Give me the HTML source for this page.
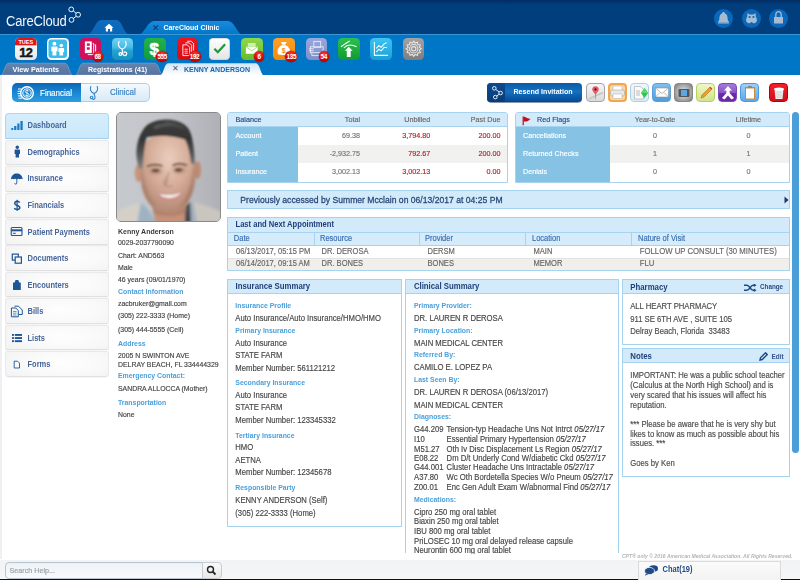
<!DOCTYPE html>
<html><head><meta charset="utf-8"><style>
*{margin:0;padding:0;box-sizing:border-box}
html,body{width:800px;height:580px;overflow:hidden;background:#fff;font-family:"Liberation Sans",sans-serif}
body{position:relative}
.a{position:absolute}
.t{position:absolute;white-space:nowrap;line-height:1}
.ic{position:absolute;top:38px;width:21.5px;height:21.5px;border-radius:4.5px;overflow:hidden}
.ic svg{position:absolute;left:0;top:0}
.badge{position:absolute;height:11px;min-width:11px;border-radius:6px;background:radial-gradient(circle at 50% 30%,#ff3b3b 0,#d40000 60%,#a00 100%);color:#fff;font:bold 6.4px/11px "Liberation Sans",sans-serif;text-align:center;letter-spacing:-0.35px;padding:0 1px;box-shadow:0 0 0 0.5px rgba(120,0,0,.4)}
.side{position:absolute;left:5.5px;width:103.5px;background:linear-gradient(180deg,#fdfdfd 0,#f3f3f3 100%);border:1px solid #e3e3e3;border-top:0}
.box{position:absolute;border:1px solid #a8d4f1;background:#fff}
</style></head><body>
<div class="a" style="left:0px;top:0px;width:800px;height:34px;background:#003e7e"></div>
<div class="a" style="left:0px;top:0px;width:800px;height:4.5px;background:linear-gradient(#002c62 0,#00336c 30%,#003a76 65%,#003e7e 100%)"></div>
<div class="t" style="left:6px;top:13.6px;font-size:14px;color:#f4f8fc;transform:scaleX(0.93);transform-origin:0 0;letter-spacing:-0.2px">CareCloud</div>
<svg class="a" style="left:66px;top:4px" width="16" height="22" viewBox="66 4 16 22"><g fill="none" stroke="#f4f8fc" stroke-width="1"><circle cx="71.25" cy="9.4" r="2.4"/><circle cx="78.1" cy="14.75" r="2.4"/><circle cx="71.5" cy="19.9" r="2.4"/><line x1="73.2" y1="10.9" x2="76.2" y2="13.3"/><line x1="76.2" y1="16.3" x2="73.4" y2="18.4"/></g></svg>
<svg class="a" style="left:0;top:0" width="800" height="36" viewBox="0 0 800 36">
<defs><linearGradient id="tabA" x1="0" y1="0" x2="0" y2="1"><stop offset="0" stop-color="#1a8ae0"/><stop offset="1" stop-color="#0077c6"/></linearGradient>
<linearGradient id="tabH" x1="0" y1="0" x2="0" y2="1"><stop offset="0" stop-color="#0f6dbd"/><stop offset="1" stop-color="#0a66b5"/></linearGradient></defs>
<path d="M89,34.5 C94,30 96,20.5 101,20 L116.5,20 C121.5,20.5 123,30 127.8,34.5 Z" fill="url(#tabH)"/>
<path d="M140,34.5 C146,30 148,21.5 154,21 L228,21 C234,21.5 236,30 241,34.5 Z" fill="url(#tabA)"/>
</svg>
<svg class="a" style="left:103.5px;top:22.8px" width="10" height="9.2" viewBox="0 0 12 11"><path d="M6,0.8 L11.4,5.6 L9.8,5.6 L9.8,10.2 L7.2,10.2 L7.2,7.2 L4.8,7.2 L4.8,10.2 L2.2,10.2 L2.2,5.6 L0.6,5.6 Z" fill="#fff"/></svg>
<div class="t" style="left:151.5px;top:23.8px;font-size:8.5px;color:#0a3a6e">&#x2715;</div>
<div class="t" style="left:163.50px;top:24.75px;font-size:6.95px;color:#fff;font-weight:bold;transform:scaleY(1.09);transform-origin:50% 48%;">CareCloud Clinic</div>
<div class="a" style="left:714.0px;top:8.5px;width:19px;height:19px;border-radius:50%;background:#0a68ba"></div>
<div class="a" style="left:741.5px;top:8.5px;width:19px;height:19px;border-radius:50%;background:#0a68ba"></div>
<div class="a" style="left:769.0px;top:8.5px;width:19px;height:19px;border-radius:50%;background:#0a68ba"></div>
<svg class="a" style="left:714px;top:9px" width="20" height="18" viewBox="0 0 20 18"><path d="M9.5,3 C10.6,3 11,3.8 11,4.4 C13,5 13.5,7 13.6,9.5 L13.9,11.6 L15.2,13 L3.8,13 L5.1,11.6 L5.4,9.5 C5.5,7 6,5 8,4.4 C8,3.8 8.4,3 9.5,3 Z" fill="#a9bbd0"/><rect x="4" y="13.2" width="11" height="1.3" rx="0.6" fill="#a9bbd0"/></svg>
<svg class="a" style="left:742px;top:9px" width="20" height="18" viewBox="0 0 20 18"><path d="M5.5,4 L7.5,5.5 L11.5,5.5 L13.5,4 L13.8,8 C15,9 15.2,11 14.5,13 L12,14.5 L9.5,13 L7,14.5 L4.5,13 C3.8,11 4,9 5.2,8 Z" fill="#a9bbd0"/><circle cx="7.6" cy="8" r="1.1" fill="#0a68ba"/><circle cx="11.4" cy="8" r="1.1" fill="#0a68ba"/></svg>
<svg class="a" style="left:769px;top:9px" width="20" height="18" viewBox="0 0 20 18"><path d="M6.8,8 L6.8,6 C6.8,3.6 8,2.6 9.5,2.6 C11,2.6 12.2,3.6 12.2,6 L12.2,8" fill="none" stroke="#a9bbd0" stroke-width="1.3"/><rect x="5" y="8" width="9" height="6.5" fill="#a9bbd0"/></svg>
<div class="a" style="left:0px;top:34px;width:800px;height:41px;background:#0077c6"></div>
<div class="a" style="left:0px;top:34px;width:800px;height:1px;background:#3a95d6"></div>
<div class="ic" style="left:15px;background:linear-gradient(#fff,#e8e8e8)"><svg width="21.5" height="21.5" viewBox="0 0 22 22"><rect x="0" y="0" width="22" height="7.5" fill="#e4141b"/><text x="11" y="6.3" font-family="Liberation Sans" font-weight="bold" font-size="5.6" fill="#fff" text-anchor="middle">TUES</text><text x="11" y="19.8" font-family="Liberation Sans" font-weight="bold" font-size="13" fill="#151515" stroke="#151515" stroke-width="0.5" text-anchor="middle" letter-spacing="-0.5">12</text></svg></div>
<div class="ic" style="left:47.3px;background:#fff"><svg width="21.5" height="21.5" viewBox="0 0 22 22"><rect x="1.5" y="1.5" width="19" height="19" rx="3" fill="#3bbdec"/><g fill="#fff"><circle cx="7.6" cy="5.8" r="2"/><path d="M5.2,8.6 L10,8.6 C10.5,8.6 10.8,9 10.8,9.5 L10.8,13.5 L9.6,13.5 L9.6,18 L5.6,18 L5.6,13.5 L4.4,13.5 L4.4,9.5 C4.4,9 4.7,8.6 5.2,8.6 Z"/><circle cx="14.6" cy="7.6" r="1.8"/><path d="M12.5,10.2 L16.7,10.2 C17.2,10.2 17.5,10.6 17.5,11 L17.5,14.2 L16.5,14.2 L16.5,18 L12.7,18 L12.7,14.2 L11.7,14.2 L11.7,11 C11.7,10.6 12,10.2 12.5,10.2 Z"/></g></svg></div>
<div class="ic" style="left:79.6px;background:#d2105a"><svg width="21.5" height="21.5" viewBox="0 0 22 22"><g fill="none" stroke="#fff" stroke-width="1"><rect x="5.5" y="4" width="6" height="11" fill="#fff"/><path d="M13,5.5 L14,5.5 L14,16 M15,7 L16,7 L16,17 M8,17 L14,17"/></g><rect x="7" y="5.5" width="3" height="2.5" fill="#d2105a"/><rect x="7" y="9.5" width="3" height="2.5" fill="#d2105a"/></svg></div>
<div class="badge" style="left:92.6px;top:50.5px;min-width:10px">68</div>
<div class="ic" style="left:111.9px;background:linear-gradient(#74d2f2 0,#4cbde8 40%,#23a2d2 58%,#1a8fbd 100%)"><svg width="21.5" height="21.5" viewBox="0 0 22 22"><g fill="none" stroke="#fff" stroke-width="1.3"><path d="M7.5,3.2 C5.5,6 6.5,10 10.5,11.5 C14.5,10 15.5,6 13.5,3.2"/><path d="M10.5,11.5 L10.8,15.5 C11,18.5 14.5,18.8 15,16.3 C15.4,14.2 13,13.5 12,15"/><circle cx="8.6" cy="16.4" r="1.4"/></g></svg></div>
<div class="ic" style="left:144.2px;background:linear-gradient(#23b24c,#129a3c)"><svg width="21.5" height="21.5" viewBox="0 0 22 22"><text x="10.5" y="17.8" font-family="Liberation Sans" font-weight="bold" font-size="17.5" fill="#fff" stroke="#fff" stroke-width="0.6" text-anchor="middle">$</text></svg></div>
<div class="badge" style="left:156.2px;top:50.5px;min-width:12px">555</div>
<div class="ic" style="left:176.5px;background:linear-gradient(#f0141e,#d80a12)"><svg width="21.5" height="21.5" viewBox="0 0 22 22"><g fill="none" stroke="#fff" stroke-width="0.9"><path d="M6,7 L10.5,7 L13,9.5 L13,18 L6,18 Z"/><path d="M8.5,5 L12.5,5 L15,7.5 L15,15"/><path d="M10.5,3.3 L14.5,3.3 L17,5.8 L17,13"/><path d="M7.8,11.5 L11,11.5 M7.8,13.5 L11,13.5 M7.8,15.5 L11,15.5"/></g></svg></div>
<div class="badge" style="left:188.5px;top:50.5px;min-width:12px">192</div>
<div class="ic" style="left:208.8px;background:linear-gradient(#ffffff,#e4e4e4)"><svg width="21.5" height="21.5" viewBox="0 0 22 22"><path d="M5.5,11 L9,14.5 L16.5,6.5" fill="none" stroke="#1a9a3a" stroke-width="2.3"/></svg></div>
<div class="a" style="left:208.8px;top:38px;width:21.5px;height:21.5px;border-radius:4.5px;box-shadow:inset 0 0 0 0.6px #bbb"></div>
<div class="ic" style="left:241.1px;background:linear-gradient(#8fd84a,#66bb2a)"><svg width="21.5" height="21.5" viewBox="0 0 22 22"><g fill="#fff"><path d="M5,9 L17,9 L17,16 L5,16 Z" /><path d="M7,5 L15,5 L15,9 L7,9 Z" fill="#cfeeb0"/></g><path d="M5,9 L11,13 L17,9" fill="none" stroke="#8fd84a" stroke-width="0.8"/></svg></div>
<div class="badge" style="left:254.1px;top:50.5px;min-width:10px">6</div>
<div class="ic" style="left:273.4px;background:linear-gradient(#ffa126,#f08a0c)"><svg width="21.5" height="21.5" viewBox="0 0 22 22"><g fill="#fff"><path d="M8,4 L14,4 L12.5,7 L9.5,7 Z"/><path d="M9,7.5 L13,7.5 C17,9.5 18,13 17,16 C16,18 6,18 5,16 C4,13 5,9.5 9,7.5 Z"/></g><text x="11" y="15.5" font-family="Liberation Sans" font-weight="bold" font-size="7" fill="#f08a0c" text-anchor="middle">$</text></svg></div>
<div class="badge" style="left:285.4px;top:50.5px;min-width:12px">135</div>
<div class="ic" style="left:305.7px;background:linear-gradient(#9aa8dc,#7f8fcb)"><svg width="21.5" height="21.5" viewBox="0 0 22 22"><g fill="none" stroke="#e8ecf8" stroke-width="0.9"><rect x="8" y="3.5" width="7" height="6"/><rect x="4.5" y="9" width="13" height="6"/><path d="M6,15 L6,18 L16,18 L16,15"/><path d="M3,11 L8,11 M3,13 L8,13"/></g></svg></div>
<div class="badge" style="left:318.7px;top:50.5px;min-width:10px">54</div>
<div class="ic" style="left:338px;background:linear-gradient(#2cc04e,#119a32)"><svg width="21.5" height="21.5" viewBox="0 0 22 22"><g fill="none" stroke="#fff" stroke-width="1.1"><path d="M3,9 C7,6 9,4.5 12,3 M6,10 C9,7 13,6 19,9"/></g><path d="M11,9 L15,13 L13,13 L13,19.5 L9,19.5 L9,13 L7,13 Z" fill="#fff"/></svg></div>
<div class="ic" style="left:370.3px;background:linear-gradient(#3cc4f4,#1aa0d8)"><svg width="21.5" height="21.5" viewBox="0 0 22 22"><g fill="none" stroke="#fff" stroke-width="1.1"><path d="M4.5,4 L4.5,17.8 L18.5,17.8"/><path d="M6.5,14.5 L9,11.5 L11.5,13.2 L14.5,9.5 L17.5,10"/><path d="M6.5,10.5 L9,7.8 L11.5,9.5 L14.5,6 L17,4.8"/></g></svg></div>
<div class="ic" style="left:402.6px;background:linear-gradient(#a4a2a2,#7e7c7c)"><svg width="21.5" height="21.5" viewBox="0 0 22 22"><g fill="none" stroke="#e6e6e6" stroke-width="1.1"><circle cx="11" cy="11" r="2.2"/><circle cx="11" cy="11" r="4.3"/><path d="M11,3.2 L12.4,5.2 L14.8,4.3 L15.2,6.8 L17.7,7.2 L16.8,9.6 L18.8,11 L16.8,12.4 L17.7,14.8 L15.2,15.2 L14.8,17.7 L12.4,16.8 L11,18.8 L9.6,16.8 L7.2,17.7 L6.8,15.2 L4.3,14.8 L5.2,12.4 L3.2,11 L5.2,9.6 L4.3,7.2 L6.8,6.8 L7.2,4.3 L9.6,5.2 Z"/></g></svg></div>
<svg class="a" style="left:0;top:62px" width="800" height="13" viewBox="0 0 800 13">
<defs><linearGradient id="stab" x1="0" y1="0" x2="0" y2="1"><stop offset="0" stop-color="#6483ad"/><stop offset="1" stop-color="#5474a0"/></linearGradient>
<linearGradient id="ktab" x1="0" y1="0" x2="0" y2="1"><stop offset="0" stop-color="#cfe6f7"/><stop offset="1" stop-color="#ffffff"/></linearGradient></defs>
<path d="M1.5,13 C4,11 5,1.5 8.5,1.2 L65,1.2 C68.5,1.5 69.5,11 72,13 Z" fill="url(#stab)" stroke="#8ea6c6" stroke-width="0.6"/>
<path d="M76,13 C78.5,11 79.5,1.5 83,1.2 L155,1.2 C158.5,1.5 159.5,11 162,13 Z" fill="url(#stab)" stroke="#8ea6c6" stroke-width="0.6"/>
<path d="M161,13 C163.5,11 164.5,1.5 168,1.2 L256,1.2 C259.5,1.5 260.5,11 263,13 Z" fill="url(#ktab)"/>
</svg>
<div class="t" style="left:12.50px;top:65.51px;font-size:7.25px;color:#fff;font-weight:bold;transform:scaleY(1.09);transform-origin:50% 48%;">View Patients</div>
<div class="t" style="left:88.00px;top:65.63px;font-size:7px;color:#fff;font-weight:bold;transform:scaleY(1.09);transform-origin:50% 48%;">Registrations (41)</div>
<div class="t" style="left:172px;top:65px;font-size:7.5px;color:#557">&#x2715;</div>
<div class="t" style="left:184.00px;top:66.13px;font-size:7px;color:#1a64a8;font-weight:bold;transform:scaleY(1.09);transform-origin:50% 48%;">KENNY ANDERSON</div>
<div class="a" style="left:11.5px;top:83px;width:69.5px;height:18.5px;border-radius:5px 0 0 5px;background:linear-gradient(#0b67b6 0,#1a86d2 50%,#2c9de0 100%)"></div>
<div class="a" style="left:80.5px;top:83px;width:69.5px;height:18.5px;border-radius:0 5px 5px 0;background:linear-gradient(#f3f9fd,#d9eaf8);border:1px solid #a8d0ef;border-left:0"></div>
<svg class="a" style="left:15px;top:84px" width="22" height="18" viewBox="15 84 22 18"><g fill="none" stroke="#fff"><circle cx="27" cy="93" r="6.3" stroke-width="1.4"/><circle cx="27" cy="93" r="4.2" stroke-width="1"/></g><path d="M28.8,91.3 C28.5,90.7 27.9,90.4 27,90.4 C26,90.4 25.3,90.9 25.3,91.7 C25.3,93.5 28.8,92.6 28.8,94.4 C28.8,95.3 28,95.7 27,95.7 C26,95.7 25.3,95.3 25,94.7" fill="none" stroke="#fff" stroke-width="0.9"/><path d="M27,89.5 L27,96.5" stroke="#fff" stroke-width="0.6"/><g stroke="#fff" stroke-width="1"><line x1="18" y1="89" x2="21.5" y2="89"/><line x1="17.5" y1="91.3" x2="21" y2="91.3"/><line x1="17.5" y1="93.6" x2="21" y2="93.6"/><line x1="18" y1="95.9" x2="21.3" y2="95.9"/><line x1="18.5" y1="98.2" x2="22" y2="98.2"/></g></svg>
<div class="t" style="left:40.00px;top:89.64px;font-size:8px;color:#fff;-webkit-text-stroke:0.15px #fff;transform:scaleY(1.09);transform-origin:50% 48%;">Financial</div>
<svg class="a" style="left:89px;top:84.5px" width="11" height="16" viewBox="0 0 11 16"><g fill="none" stroke="#3a86c8" stroke-width="1.1"><path d="M2,1 C0.5,4 1.5,7 5,8.5 C8.5,7 9.5,4 8,1"/><path d="M5,8.5 L6,12 C6.5,14.5 4,15 3,13.5"/><circle cx="2.6" cy="12.5" r="1.3"/></g></svg>
<div class="t" style="left:110.00px;top:89.44px;font-size:8px;color:#3580c2;-webkit-text-stroke:0.15px #3580c2;transform:scaleY(1.09);transform-origin:50% 48%;">Clinical</div>
<div class="a" style="left:487px;top:82.8px;width:95px;height:18.8px;border-radius:4px;background:linear-gradient(#0c5aa6 0,#1470c0 45%,#0b5aa8 75%,#074890 100%);box-shadow:0 0.5px 0.5px #0a3260"></div>
<div class="a" style="left:487px;top:82.8px;width:18px;height:18.8px;border-radius:4px 0 0 4px;background:linear-gradient(#0d4a8e,#083c78)"></div>
<svg class="a" style="left:487px;top:82.8px" width="18" height="19" viewBox="487 82.8 18 19"><g fill="none" stroke="#f0f4f8" stroke-width="0.95"><circle cx="494.3" cy="88.1" r="1.8"/><circle cx="500.6" cy="92.8" r="1.8"/><circle cx="495.3" cy="96.9" r="1.8"/><line x1="495.7" y1="89.2" x2="499.1" y2="91.7"/><line x1="499.2" y1="94" x2="496.7" y2="95.8"/></g></svg>
<div class="t" style="left:513.50px;top:89.28px;font-size:7.1px;color:#fff;font-weight:bold;transform:scaleY(1.09);transform-origin:50% 48%;">Resend Invitation</div>
<div class="a" style="left:586px;top:83px;width:19px;height:18.5px;border-radius:4px;background:linear-gradient(#f6f6f6,#dadada);border:1px solid #a4a4a4;overflow:hidden"><svg width="19" height="18.5" viewBox="0 0 19 18.5" style="position:absolute;left:-1px;top:-1px"><path d="M3,16 L17,9.5" stroke="#c4c4c4" stroke-width="1.6"/><path d="M9.5,3.2 C11.8,3.2 12.8,4.8 12.8,6.4 C12.8,8.4 10.6,9.5 9.9,11.5 L9.7,16.5 L9.3,16.5 L9.1,11.5 C8.4,9.5 6.2,8.4 6.2,6.4 C6.2,4.8 7.2,3.2 9.5,3.2 Z" fill="#e85a68"/><circle cx="9.5" cy="6.4" r="1.1" fill="#222"/></svg></div>
<div class="a" style="left:608px;top:83px;width:19px;height:18.5px;border-radius:4px;background:#f6a64a;border:none;overflow:hidden"><svg width="19" height="18.5" viewBox="0 0 19 18.5" style="position:absolute;left:-1px;top:-1px"><rect x="3" y="3" width="15" height="15" rx="3" fill="#fcd9a8"/><rect x="6" y="4" width="9" height="5" fill="#fff" stroke="#aaa" stroke-width="0.5"/><rect x="3.5" y="8" width="14" height="6" rx="1.5" fill="#e8e8e8" stroke="#999" stroke-width="0.5"/><rect x="6" y="12" width="9" height="4.5" fill="#fff" stroke="#aaa" stroke-width="0.5"/></svg></div>
<div class="a" style="left:630px;top:83px;width:19px;height:18.5px;border-radius:4px;background:linear-gradient(#eef7fd,#d6eaf8);border:1px solid #b4cfe2;overflow:hidden"><svg width="19" height="18.5" viewBox="0 0 19 18.5" style="position:absolute;left:-1px;top:-1px"><path d="M4.5,3.5 L10.5,3.5 L13.5,6.5 L13.5,16 L4.5,16 Z" fill="#fafafa" stroke="#aaa" stroke-width="0.6"/><path d="M6,8 L10,8 M6,10 L10,10 M6,12 L10,12" stroke="#999" stroke-width="0.6"/><path d="M14.5,5 L18,10 L14.5,15 L11,10 Z" fill="#33c24e"/><path d="M14.5,5 L18,10 L11,10 Z" fill="#5ad86a"/></svg></div>
<div class="a" style="left:652px;top:83px;width:19px;height:18.5px;border-radius:4px;background:linear-gradient(#7fc0f0,#4a9de0);border:1px solid #5aa0d8;overflow:hidden"><svg width="19" height="18.5" viewBox="0 0 19 18.5" style="position:absolute;left:-1px;top:-1px"><rect x="3.5" y="5" width="13" height="9" fill="#fff" stroke="#888" stroke-width="0.5"/><path d="M3.5,5 L10,10.5 L16.5,5 M3.5,14 L8,9.5 M16.5,14 L12,9.5" fill="none" stroke="#888" stroke-width="0.6"/></svg></div>
<div class="a" style="left:674px;top:83px;width:19px;height:18.5px;border-radius:4px;background:radial-gradient(circle,#eee 0,#aaa 60%,#777 100%);border:1px solid #888;overflow:hidden"><svg width="19" height="18.5" viewBox="0 0 19 18.5" style="position:absolute;left:-1px;top:-1px"><rect x="4.5" y="6" width="11" height="8" rx="1.2" fill="#555"/><rect x="7" y="7" width="6" height="6" fill="#5aa8e8"/></svg></div>
<div class="a" style="left:696px;top:83px;width:19px;height:18.5px;border-radius:4px;background:linear-gradient(#eef7c8,#cfe48a);border:1px solid #b8d060;overflow:hidden"><svg width="19" height="18.5" viewBox="0 0 19 18.5" style="position:absolute;left:-1px;top:-1px"><path d="M5,15 L6,12 L13.5,4.5 L15.5,6.5 L8,14 Z" fill="#f0a020" stroke="#a06010" stroke-width="0.5"/><path d="M13.5,4.5 L15.5,6.5 L16.3,5.7 L14.3,3.7 Z" fill="#e23"/></svg></div>
<div class="a" style="left:718px;top:83px;width:19px;height:18.5px;border-radius:4px;background:linear-gradient(#a67ad8 0,#8a52c6 55%,#6a2aa8 56%,#6a2aa8 100%);border:1px solid #7a4ab8;overflow:hidden"><svg width="19" height="18.5" viewBox="0 0 19 18.5" style="position:absolute;left:-1px;top:-1px"><path d="M10,3 L14,7.5 L11.6,7.5 L11.6,10 L16,15 L13.5,16.5 L10,12.5 L6.5,16.5 L4,15 L8.4,10 L8.4,7.5 L6,7.5 Z" fill="#fff"/></svg></div>
<div class="a" style="left:740px;top:83px;width:19px;height:18.5px;border-radius:4px;background:linear-gradient(#9dd0f8,#5aa8ec);border:1px solid #4a98e0;overflow:hidden"><svg width="19" height="18.5" viewBox="0 0 19 18.5" style="position:absolute;left:-1px;top:-1px"><rect x="5" y="4" width="10" height="12.5" fill="#c88a40"/><rect x="6" y="5.5" width="8" height="10" fill="#fff"/><rect x="8" y="3" width="4" height="2" fill="#888"/></svg></div>
<div class="a" style="left:769px;top:83px;width:19px;height:18.5px;border-radius:4px;background:linear-gradient(#f0202a,#d0101a);border:1px solid #b00;overflow:hidden"><svg width="19" height="18.5" viewBox="0 0 19 18.5" style="position:absolute;left:-1px;top:-1px"><path d="M5.5,6 L14.5,6 L13.5,16 L6.5,16 Z" fill="#eee"/><ellipse cx="10" cy="6" rx="5" ry="1.6" fill="#fff"/><path d="M8,8 L8.2,15 M10,8 L10,15 M12,8 L11.8,15" stroke="#bbb" stroke-width="0.5"/></svg></div>
<div class="a" style="left:0px;top:75px;width:1.6px;height:484px;background:#eff0f2"></div>
<div class="a" style="left:5.3px;top:113px;width:103.5px;height:25.8px;border-radius:4px 4px 1px 1px;background:linear-gradient(#d6eefc,#c9e8fb);border:1px solid #acd7f2;border-bottom-color:#a4d0ee"></div>
<div class="t" style="left:27.50px;top:122.39px;font-size:7.5px;color:#46659a;font-weight:bold;transform:scaleY(1.09);transform-origin:50% 48%;">Dashboard</div>
<div class="a" style="left:5.3px;top:139.8px;width:103.5px;height:25.6px;border-radius:2px;background:radial-gradient(ellipse 70% 90% at 55% 45%,#fefefe 0,#f9f9f9 55%,#f2f2f2 100%);border:1px solid #e9e9e9;border-bottom-color:#e0e0e0;box-shadow:0 0.6px 0.6px rgba(0,0,0,0.07)"></div>
<div class="t" style="left:27.50px;top:148.94px;font-size:7.5px;color:#46659a;font-weight:bold;transform:scaleY(1.09);transform-origin:50% 48%;">Demographics</div>
<div class="a" style="left:5.3px;top:166.2px;width:103.5px;height:25.6px;border-radius:2px;background:radial-gradient(ellipse 70% 90% at 55% 45%,#fefefe 0,#f9f9f9 55%,#f2f2f2 100%);border:1px solid #e9e9e9;border-bottom-color:#e0e0e0;box-shadow:0 0.6px 0.6px rgba(0,0,0,0.07)"></div>
<div class="t" style="left:27.50px;top:175.48px;font-size:7.5px;color:#46659a;font-weight:bold;transform:scaleY(1.09);transform-origin:50% 48%;">Insurance</div>
<div class="a" style="left:5.3px;top:192.6px;width:103.5px;height:25.6px;border-radius:2px;background:radial-gradient(ellipse 70% 90% at 55% 45%,#fefefe 0,#f9f9f9 55%,#f2f2f2 100%);border:1px solid #e9e9e9;border-bottom-color:#e0e0e0;box-shadow:0 0.6px 0.6px rgba(0,0,0,0.07)"></div>
<div class="t" style="left:27.50px;top:202.03px;font-size:7.5px;color:#46659a;font-weight:bold;transform:scaleY(1.09);transform-origin:50% 48%;">Financials</div>
<div class="a" style="left:5.3px;top:219.0px;width:103.5px;height:25.6px;border-radius:2px;background:radial-gradient(ellipse 70% 90% at 55% 45%,#fefefe 0,#f9f9f9 55%,#f2f2f2 100%);border:1px solid #e9e9e9;border-bottom-color:#e0e0e0;box-shadow:0 0.6px 0.6px rgba(0,0,0,0.07)"></div>
<div class="t" style="left:27.50px;top:228.58px;font-size:7.5px;color:#46659a;font-weight:bold;transform:scaleY(1.09);transform-origin:50% 48%;">Patient Payments</div>
<div class="a" style="left:5.3px;top:245.4px;width:103.5px;height:25.6px;border-radius:2px;background:radial-gradient(ellipse 70% 90% at 55% 45%,#fefefe 0,#f9f9f9 55%,#f2f2f2 100%);border:1px solid #e9e9e9;border-bottom-color:#e0e0e0;box-shadow:0 0.6px 0.6px rgba(0,0,0,0.07)"></div>
<div class="t" style="left:27.50px;top:255.13px;font-size:7.5px;color:#46659a;font-weight:bold;transform:scaleY(1.09);transform-origin:50% 48%;">Documents</div>
<div class="a" style="left:5.3px;top:271.8px;width:103.5px;height:25.6px;border-radius:2px;background:radial-gradient(ellipse 70% 90% at 55% 45%,#fefefe 0,#f9f9f9 55%,#f2f2f2 100%);border:1px solid #e9e9e9;border-bottom-color:#e0e0e0;box-shadow:0 0.6px 0.6px rgba(0,0,0,0.07)"></div>
<div class="t" style="left:27.50px;top:281.69px;font-size:7.5px;color:#46659a;font-weight:bold;transform:scaleY(1.09);transform-origin:50% 48%;">Encounters</div>
<div class="a" style="left:5.3px;top:298.2px;width:103.5px;height:25.6px;border-radius:2px;background:radial-gradient(ellipse 70% 90% at 55% 45%,#fefefe 0,#f9f9f9 55%,#f2f2f2 100%);border:1px solid #e9e9e9;border-bottom-color:#e0e0e0;box-shadow:0 0.6px 0.6px rgba(0,0,0,0.07)"></div>
<div class="t" style="left:27.50px;top:308.24px;font-size:7.5px;color:#46659a;font-weight:bold;transform:scaleY(1.09);transform-origin:50% 48%;">Bills</div>
<div class="a" style="left:5.3px;top:324.6px;width:103.5px;height:25.6px;border-radius:2px;background:radial-gradient(ellipse 70% 90% at 55% 45%,#fefefe 0,#f9f9f9 55%,#f2f2f2 100%);border:1px solid #e9e9e9;border-bottom-color:#e0e0e0;box-shadow:0 0.6px 0.6px rgba(0,0,0,0.07)"></div>
<div class="t" style="left:27.50px;top:334.78px;font-size:7.5px;color:#46659a;font-weight:bold;transform:scaleY(1.09);transform-origin:50% 48%;">Lists</div>
<div class="a" style="left:5.3px;top:351.0px;width:103.5px;height:25.6px;border-radius:2px 2px 4px 4px;background:radial-gradient(ellipse 70% 90% at 55% 45%,#fefefe 0,#f9f9f9 55%,#f2f2f2 100%);border:1px solid #e9e9e9;border-bottom-color:#e0e0e0;box-shadow:0 0.6px 0.6px rgba(0,0,0,0.07)"></div>
<div class="t" style="left:27.50px;top:361.34px;font-size:7.5px;color:#46659a;font-weight:bold;transform:scaleY(1.09);transform-origin:50% 48%;">Forms</div>
<svg class="a" style="left:0;top:105px" width="30" height="275" viewBox="0 105 30 275"><g fill="#1d5596">
<g fill="#1a78c6"><rect x="11.3" y="128" width="2" height="2"/><rect x="14.2" y="126" width="2.2" height="4"/><rect x="17.3" y="123.5" width="2.2" height="6.5"/><rect x="20.4" y="121" width="2.3" height="9"/></g>
<circle cx="17.3" cy="147.3" r="1.7"/><path d="M15.2,149.6 L19.4,149.6 C19.9,149.6 20,150 20,150.5 L20,154 L19,154 L19,157.6 L15.6,157.6 L15.6,154 L14.6,154 L14.6,150.5 C14.6,150 14.8,149.6 15.2,149.6 Z"/>
<path d="M10.9,179.3 C11.4,175.5 13.8,173.5 16.8,173.5 C19.8,173.5 22.3,175.5 22.8,179.3 C21.8,178.4 20.6,178.4 19.8,179.3 C19,178.4 17.6,178.4 16.8,179.3 C16,178.4 14.6,178.4 13.8,179.3 C13,178.4 11.8,178.4 10.9,179.3 Z"/><path d="M16.8,179 L16.8,183 C16.8,184.6 15,184.6 14.7,183.2" fill="none" stroke="#1d5596" stroke-width="0.9"/>
<path d="M19.6,202.6 C19.2,201.6 18.3,201.3 17.2,201.3 C15.6,201.3 14.7,202.1 14.7,203.3 C14.7,206.2 19.8,204.6 19.8,207.6 C19.8,208.9 18.7,209.6 17.1,209.6 C15.8,209.6 14.8,209.1 14.4,208" fill="none" stroke="#1d5596" stroke-width="1.5"/><rect x="16.5" y="199.8" width="1.2" height="11"/>
<rect x="11.2" y="227.5" width="10.8" height="8" rx="1" fill="none" stroke="#1d5596" stroke-width="1.1"/><rect x="11.2" y="229.3" width="10.8" height="2"/><rect x="12.8" y="232.8" width="3" height="1"/>
<rect x="12.3" y="254.1" width="6" height="6" fill="none" stroke="#1d5596" stroke-width="1.2"/><rect x="15.2" y="257" width="6.2" height="6.2" fill="#f6f6f6" stroke="#1d5596" stroke-width="1.2"/>
<rect x="13" y="282.5" width="7.8" height="7.5" rx="0.6"/><path d="M14.5,283 L15.5,280 L18.3,280 L19.3,283 Z"/>
<path d="M11.4,308 L15.8,308 L18.3,310.5 L18.3,316.8 L11.4,316.8 Z" fill="#f6f6f6" stroke="#1d5596" stroke-width="1"/><path d="M14.5,306.2 L18.5,306.2 L22.3,310 L22.3,314.5 L19,314.5" fill="none" stroke="#1d5596" stroke-width="1"/><path d="M13,311.5 L16.5,311.5 M13,313.2 L16.5,313.2 M13,315 L16.5,315" stroke="#1d5596" stroke-width="0.6"/>
<rect x="12" y="334" width="1.9" height="1.9"/><rect x="14.8" y="334" width="7.2" height="1.9"/><rect x="12" y="337.1" width="1.9" height="1.9"/><rect x="14.8" y="337.1" width="7.2" height="1.9"/><rect x="12" y="340.2" width="1.9" height="1.9"/><rect x="14.8" y="340.2" width="7.2" height="1.9"/>
<path d="M14.2,361.2 L17.6,361.2 L19.5,363.1 L19.5,368 L14.2,368 Z" fill="#f8f8f8" stroke="#1d5596" stroke-width="0.9"/>
</g></svg>
<div class="a" style="left:116.2px;top:112.3px;width:104.6px;height:110px;border-radius:5px;overflow:hidden;border:1px solid #8a8a8a;background:#c9cacd">
<svg width="103" height="108" viewBox="0 0 103 108" style="position:absolute;left:0;top:0">
<defs>
<linearGradient id="pbg" x1="0" y1="0" x2="1" y2="0"><stop offset="0" stop-color="#c6c9ce"/><stop offset="0.5" stop-color="#c2c4c9"/><stop offset="1" stop-color="#b0b0b7"/></linearGradient>
<radialGradient id="skin" cx="0.52" cy="0.3" r="0.75"><stop offset="0" stop-color="#eacdbd"/><stop offset="0.45" stop-color="#d8b09c"/><stop offset="1" stop-color="#ad826e"/></radialGradient>
<linearGradient id="hair" x1="0" y1="0" x2="0" y2="1"><stop offset="0" stop-color="#3a3a3a"/><stop offset="0.4" stop-color="#363636"/><stop offset="0.7" stop-color="#555"/><stop offset="1" stop-color="#8a8a8a"/></linearGradient>
<filter id="bl" x="-20%" y="-20%" width="140%" height="140%"><feGaussianBlur stdDeviation="1.5"/></filter>
<filter id="bl2" x="-10%" y="-10%" width="120%" height="120%"><feGaussianBlur stdDeviation="0.8"/></filter>
</defs>
<rect width="103" height="108" fill="url(#pbg)"/>
<g filter="url(#bl)">
<path d="M-2,110 L-2,99 C6,95 14,92 22,90 L26,110 Z" fill="#d4d0c8"/>
<path d="M76,110 L76,89 C86,91 96,95 105,99 L105,110 Z" fill="#c9c6c0"/>
<path d="M20,110 L24,90 C28,92 33,98 38,108 L38,110 Z" fill="#9fb2c2"/>
<path d="M66,110 L68,98 C70,94 72,90 76,88 L80,110 Z" fill="#a2b0bc"/>
<path d="M67,110 L69,92 L73,89 L74,110 Z" fill="#3c4048"/>
<path d="M34,80 C35,92 37,100 38,110 L68,110 C68,100 69,92 71,80 Z" fill="#c4927a"/>
<path d="M36,92 C42,100 60,100 68,92 L68,100 C60,104 44,104 36,100 Z" fill="#a87662" opacity="0.6"/>
</g>
<g filter="url(#bl2)">
<ellipse cx="21.5" cy="60" rx="3.8" ry="9" fill="#c8967e"/>
<ellipse cx="80.5" cy="57" rx="3.6" ry="9" fill="#c08c74"/>
<path d="M24,40 C24,28 35,22 50,22 C66,22 77,28 77,42 L78,62 C78,84 68,100 52,100 C36,100 24,86 24,64 Z" fill="url(#skin)"/>
<g filter="url(#bl)" opacity="0.55"><path d="M24,50 C26,70 30,84 40,94 C32,90 26,80 24,64 Z" fill="#8e6250"/><path d="M77,48 C76,68 72,84 62,95 C72,90 78,78 78,60 Z" fill="#8e6250"/><ellipse cx="39" cy="58" rx="6.5" ry="3.5" fill="#9a6e5a"/><ellipse cx="62" cy="57" rx="6.5" ry="3.5" fill="#9a6e5a"/><path d="M49,60 C48,66 46,70 46,73 L50,72 Z" fill="#a07260"/></g>
<path d="M22,56 C19,46 19,38 20,32.9 C22,22 27,13 33.5,10.1 C39,7 44,6.5 49,6.5 C56,6.5 62,8 66.6,11.1 C71,14 74,19 74.9,24.6 C76.5,32 78,42 77.8,52 L74,50 C73,42 71.5,33 68,26.5 C62,24.5 56,23.5 49,23 C42,23 35,23.5 29.8,24.1 C28,30 27,38 26.5,44 L25.5,56 Z" fill="url(#hair)"/><g filter="url(#bl2)" opacity="0.5"><path d="M36,14 C44,10 54,10 62,13 C56,12 46,12 38,16 Z" fill="#8a8a8a"/><path d="M48,9 C56,9 64,12 70,17 C62,14 56,12 48,11 Z" fill="#777"/></g>
<path d="M30,53.5 C35,51 40,51 45.5,53" fill="none" stroke="#5a4034" stroke-width="1.8"/>
<path d="M55.5,52.5 C60,50 65,50 70,52.5" fill="none" stroke="#5a4034" stroke-width="1.8"/>
<ellipse cx="38.5" cy="57.5" rx="3.8" ry="1.7" fill="#614438"/>
<ellipse cx="61.5" cy="57" rx="3.8" ry="1.7" fill="#614438"/>
<path d="M52,59 C51,64 49,69 48,72 C50,74 54,74 56,72" fill="none" stroke="#b08068" stroke-width="1"/>
<path d="M40.5,80.5 C47,86.5 58,86.5 65.5,79.5 C58,82.5 47,83 40.5,80.5 Z" fill="#f8f0ec"/>
<path d="M40.5,80.5 C47,89 58,89 65.5,79.5" fill="none" stroke="#d08890" stroke-width="1.8"/>
</g>
</svg></div>
<div class="t" style="left:118.00px;top:228.13px;font-size:7.0px;color:#3a3a3a;font-weight:bold;transform:scaleY(1.09);transform-origin:50% 48%;">Kenny Anderson</div>
<div class="t" style="left:118.00px;top:240.47px;font-size:6.9px;color:#444;-webkit-text-stroke:0.15px #444;transform:scaleY(1.09);transform-origin:50% 48%;">0029-2037790090</div>
<div class="t" style="left:118.00px;top:252.57px;font-size:6.9px;color:#444;-webkit-text-stroke:0.15px #444;transform:scaleY(1.09);transform-origin:50% 48%;">Chart: AND563</div>
<div class="t" style="left:118.00px;top:265.27px;font-size:6.9px;color:#444;-webkit-text-stroke:0.15px #444;transform:scaleY(1.09);transform-origin:50% 48%;">Male</div>
<div class="t" style="left:118.00px;top:276.57px;font-size:6.9px;color:#444;-webkit-text-stroke:0.15px #444;transform:scaleY(1.09);transform-origin:50% 48%;">46 years (09/01/1970)</div>
<div class="t" style="left:118.00px;top:288.57px;font-size:6.9px;color:#4aa0dc;font-weight:bold;transform:scaleY(1.09);transform-origin:50% 48%;">Contact Information</div>
<div class="t" style="left:118.00px;top:300.57px;font-size:6.9px;color:#444;-webkit-text-stroke:0.15px #444;transform:scaleY(1.09);transform-origin:50% 48%;">zacbruker@gmail.com</div>
<div class="t" style="left:118.00px;top:312.57px;font-size:6.9px;color:#444;-webkit-text-stroke:0.15px #444;transform:scaleY(1.09);transform-origin:50% 48%;">(305) 222-3333 (Home)</div>
<div class="t" style="left:118.00px;top:326.57px;font-size:6.9px;color:#444;-webkit-text-stroke:0.15px #444;transform:scaleY(1.09);transform-origin:50% 48%;">(305) 444-5555 (Cell)</div>
<div class="t" style="left:118.00px;top:341.27px;font-size:6.9px;color:#4aa0dc;font-weight:bold;transform:scaleY(1.09);transform-origin:50% 48%;">Address</div>
<div class="t" style="left:118.00px;top:352.57px;font-size:6.9px;color:#444;-webkit-text-stroke:0.15px #444;transform:scaleY(1.09);transform-origin:50% 48%;">2005 N SWINTON AVE</div>
<div class="t" style="left:118.00px;top:361.97px;font-size:6.9px;color:#444;-webkit-text-stroke:0.15px #444;transform:scaleY(1.09);transform-origin:50% 48%;">DELRAY BEACH, FL 334444329</div>
<div class="t" style="left:118.00px;top:373.37px;font-size:6.9px;color:#4aa0dc;font-weight:bold;transform:scaleY(1.09);transform-origin:50% 48%;">Emergency Contact:</div>
<div class="t" style="left:118.00px;top:385.57px;font-size:6.9px;color:#444;-webkit-text-stroke:0.15px #444;transform:scaleY(1.09);transform-origin:50% 48%;">SANDRA ALLOCCA (Mother)</div>
<div class="t" style="left:118.00px;top:399.77px;font-size:6.9px;color:#4aa0dc;font-weight:bold;transform:scaleY(1.09);transform-origin:50% 48%;">Transportation</div>
<div class="t" style="left:118.00px;top:411.97px;font-size:6.9px;color:#444;-webkit-text-stroke:0.15px #444;transform:scaleY(1.09);transform-origin:50% 48%;">None</div>
<div class="a" style="left:227px;top:112.4px;width:281.2px;height:70.2px;border:1px solid #a6d3f0;border-radius:3px 3px 0 0;background:#fff;overflow:hidden"><div class="a" style="left:0;top:0;right:0;height:13.4px;background:#d3eafa;border-bottom:1px solid #a6d3f0"></div><div class="a" style="left:0;top:13.4px;width:70px;bottom:0;background:#86c2e4"></div><div class="a" style="left:70px;top:31.8px;right:0;height:18.3px;background:#f1f1ef"></div></div>
<div class="t" style="left:235.50px;top:116.23px;font-size:7.2px;color:#2a4a80;-webkit-text-stroke:0.15px #2a4a80;transform:scaleY(1.09);transform-origin:50% 48%;">Balance</div>
<div class="t" style="right:440.00px;top:116.23px;font-size:7.2px;color:#666;-webkit-text-stroke:0.15px #666;transform:scaleY(1.09);transform-origin:50% 48%;">Total</div>
<div class="t" style="right:369.70px;top:116.23px;font-size:7.2px;color:#666;-webkit-text-stroke:0.15px #666;transform:scaleY(1.09);transform-origin:50% 48%;">Unbilled</div>
<div class="t" style="right:299.60px;top:116.23px;font-size:7.2px;color:#666;-webkit-text-stroke:0.15px #666;transform:scaleY(1.09);transform-origin:50% 48%;">Past Due</div>
<div class="t" style="left:235.50px;top:132.03px;font-size:7.2px;color:#fff;-webkit-text-stroke:0.15px #fff;transform:scaleY(1.09);transform-origin:50% 48%;">Account</div>
<div class="t" style="right:440.00px;top:132.03px;font-size:7.2px;color:#777;-webkit-text-stroke:0.15px #777;transform:scaleY(1.09);transform-origin:50% 48%;">69.38</div>
<div class="t" style="right:369.70px;top:132.03px;font-size:7.2px;color:#b4202a;-webkit-text-stroke:0.15px #b4202a;transform:scaleY(1.09);transform-origin:50% 48%;">3,794.80</div>
<div class="t" style="right:299.60px;top:132.03px;font-size:7.2px;color:#b4202a;-webkit-text-stroke:0.15px #b4202a;transform:scaleY(1.09);transform-origin:50% 48%;">200.00</div>
<div class="t" style="left:235.50px;top:150.03px;font-size:7.2px;color:#fff;-webkit-text-stroke:0.15px #fff;transform:scaleY(1.09);transform-origin:50% 48%;">Patient</div>
<div class="t" style="right:440.00px;top:150.03px;font-size:7.2px;color:#777;-webkit-text-stroke:0.15px #777;transform:scaleY(1.09);transform-origin:50% 48%;">-2,932.75</div>
<div class="t" style="right:369.70px;top:150.03px;font-size:7.2px;color:#b4202a;-webkit-text-stroke:0.15px #b4202a;transform:scaleY(1.09);transform-origin:50% 48%;">792.67</div>
<div class="t" style="right:299.60px;top:150.03px;font-size:7.2px;color:#b4202a;-webkit-text-stroke:0.15px #b4202a;transform:scaleY(1.09);transform-origin:50% 48%;">200.00</div>
<div class="t" style="left:235.50px;top:168.33px;font-size:7.2px;color:#fff;-webkit-text-stroke:0.15px #fff;transform:scaleY(1.09);transform-origin:50% 48%;">Insurance</div>
<div class="t" style="right:440.00px;top:168.33px;font-size:7.2px;color:#777;-webkit-text-stroke:0.15px #777;transform:scaleY(1.09);transform-origin:50% 48%;">3,002.13</div>
<div class="t" style="right:369.70px;top:168.33px;font-size:7.2px;color:#b4202a;-webkit-text-stroke:0.15px #b4202a;transform:scaleY(1.09);transform-origin:50% 48%;">3,002.13</div>
<div class="t" style="right:299.60px;top:168.33px;font-size:7.2px;color:#b4202a;-webkit-text-stroke:0.15px #b4202a;transform:scaleY(1.09);transform-origin:50% 48%;">0.00</div>
<div class="a" style="left:515.4px;top:112.4px;width:274.80000000000007px;height:70.2px;border:1px solid #a6d3f0;border-radius:3px 3px 0 0;background:#fff;overflow:hidden"><div class="a" style="left:0;top:0;right:0;height:13.4px;background:#d3eafa;border-bottom:1px solid #a6d3f0"></div><div class="a" style="left:0;top:13.4px;width:93.20000000000005px;bottom:0;background:#86c2e4"></div><div class="a" style="left:93.20000000000005px;top:31.8px;right:0;height:18.3px;background:#f1f1ef"></div></div>
<svg class="a" style="left:521.5px;top:115.5px" width="9" height="10" viewBox="0 0 9 10"><path d="M1.2,0.5 L1.2,9.3" stroke="#b01020" stroke-width="1.2"/><path d="M1.5,1 C3,0.2 4,1.6 5,2 C6,2.4 7,2.8 8.5,2.8 C7.5,4 6,5.5 4,5.5 C3,5.5 2.2,5.3 1.5,5.6 Z" fill="#c0101e"/></svg>
<div class="t" style="left:537.00px;top:116.23px;font-size:7.2px;color:#2a4a80;-webkit-text-stroke:0.15px #2a4a80;transform:scaleY(1.09);transform-origin:50% 48%;">Red Flags</div>
<div class="t" style="left:455.00px;width:400px;text-align:center;top:116.23px;font-size:7.2px;color:#666;-webkit-text-stroke:0.15px #666;transform:scaleY(1.09);transform-origin:50% 48%;">Year-to-Date</div>
<div class="t" style="left:548.40px;width:400px;text-align:center;top:116.23px;font-size:7.2px;color:#666;-webkit-text-stroke:0.15px #666;transform:scaleY(1.09);transform-origin:50% 48%;">Lifetime</div>
<div class="t" style="left:523.00px;top:132.03px;font-size:7.2px;color:#fff;-webkit-text-stroke:0.15px #fff;transform:scaleY(1.09);transform-origin:50% 48%;">Cancellations</div>
<div class="t" style="left:455.00px;width:400px;text-align:center;top:132.03px;font-size:7.2px;color:#777;-webkit-text-stroke:0.15px #777;transform:scaleY(1.09);transform-origin:50% 48%;">0</div>
<div class="t" style="left:548.40px;width:400px;text-align:center;top:132.03px;font-size:7.2px;color:#777;-webkit-text-stroke:0.15px #777;transform:scaleY(1.09);transform-origin:50% 48%;">0</div>
<div class="t" style="left:523.00px;top:150.03px;font-size:7.2px;color:#fff;-webkit-text-stroke:0.15px #fff;transform:scaleY(1.09);transform-origin:50% 48%;">Returned Checks</div>
<div class="t" style="left:455.00px;width:400px;text-align:center;top:150.03px;font-size:7.2px;color:#777;-webkit-text-stroke:0.15px #777;transform:scaleY(1.09);transform-origin:50% 48%;">1</div>
<div class="t" style="left:548.40px;width:400px;text-align:center;top:150.03px;font-size:7.2px;color:#777;-webkit-text-stroke:0.15px #777;transform:scaleY(1.09);transform-origin:50% 48%;">1</div>
<div class="t" style="left:523.00px;top:168.33px;font-size:7.2px;color:#fff;-webkit-text-stroke:0.15px #fff;transform:scaleY(1.09);transform-origin:50% 48%;">Denials</div>
<div class="t" style="left:455.00px;width:400px;text-align:center;top:168.33px;font-size:7.2px;color:#777;-webkit-text-stroke:0.15px #777;transform:scaleY(1.09);transform-origin:50% 48%;">0</div>
<div class="t" style="left:548.40px;width:400px;text-align:center;top:168.33px;font-size:7.2px;color:#777;-webkit-text-stroke:0.15px #777;transform:scaleY(1.09);transform-origin:50% 48%;">0</div>
<div class="a" style="left:791.7px;top:112.4px;width:7.5px;height:340.2px;border-radius:4px;background:#4b9fd9"></div>
<div class="a" style="left:227px;top:190.3px;width:563.2px;height:18.6px;background:#d3eafa;border:1px solid #a6d3f0"></div>
<div class="t" style="left:240.30px;top:196.15px;font-size:8.6px;color:#284878;-webkit-text-stroke:0.15px #284878;-webkit-text-stroke:0.25px #284878;transform:scaleY(1.09);transform-origin:50% 48%;">Previously accessed by Summer Mcclain on 06/13/2017 at 04:25 PM</div>
<svg class="a" style="left:783.5px;top:195.5px" width="5" height="8" viewBox="0 0 5 8"><path d="M0.5,0.5 L4.5,4 L0.5,7.5 Z" fill="#1a3a6a"/></svg>
<div class="a" style="left:227px;top:216.7px;width:563.2px;height:54px;border:1px solid #a6d3f0;background:#fff;overflow:hidden"><div class="a" style="left:0;top:0;right:0;height:15px;background:#d3eafa;border-bottom:1px solid #a6d3f0"></div><div class="a" style="left:0;top:15px;right:0;height:13px;background:#d6ecfa;border-bottom:1px solid #a6d3f0"></div><div class="a" style="left:0;top:40.3px;right:0;height:13px;background:#f0efeb;border-top:1px solid #e2e2e2"></div></div>
<div class="a" style="left:313.8px;top:232.5px;width:1px;height:12.2px;background:#a6d3f0"></div>
<div class="a" style="left:418.8px;top:232.5px;width:1px;height:12.2px;background:#a6d3f0"></div>
<div class="a" style="left:525.2px;top:232.5px;width:1px;height:12.2px;background:#a6d3f0"></div>
<div class="a" style="left:631.4px;top:232.5px;width:1px;height:12.2px;background:#a6d3f0"></div>
<div class="t" style="left:235.50px;top:221.04px;font-size:7.6px;color:#1f3f79;font-weight:bold;transform:scaleY(1.09);transform-origin:50% 48%;">Last and Next Appointment</div>
<div class="t" style="left:233.80px;top:235.19px;font-size:7.5px;color:#3a6eb0;-webkit-text-stroke:0.15px #3a6eb0;transform:scaleY(1.09);transform-origin:50% 48%;">Date</div>
<div class="t" style="left:320.00px;top:235.19px;font-size:7.5px;color:#3a6eb0;-webkit-text-stroke:0.15px #3a6eb0;transform:scaleY(1.09);transform-origin:50% 48%;">Resource</div>
<div class="t" style="left:425.00px;top:235.19px;font-size:7.5px;color:#3a6eb0;-webkit-text-stroke:0.15px #3a6eb0;transform:scaleY(1.09);transform-origin:50% 48%;">Provider</div>
<div class="t" style="left:532.00px;top:235.19px;font-size:7.5px;color:#3a6eb0;-webkit-text-stroke:0.15px #3a6eb0;transform:scaleY(1.09);transform-origin:50% 48%;">Location</div>
<div class="t" style="left:638.00px;top:235.19px;font-size:7.5px;color:#3a6eb0;-webkit-text-stroke:0.15px #3a6eb0;transform:scaleY(1.09);transform-origin:50% 48%;">Nature of Visit</div>
<div class="t" style="left:236.00px;top:248.06px;font-size:7.55px;color:#666;-webkit-text-stroke:0.15px #666;transform:scaleY(1.09);transform-origin:50% 48%;">06/13/2017, 05:15 PM</div>
<div class="t" style="left:321.50px;top:248.06px;font-size:7.55px;color:#666;-webkit-text-stroke:0.15px #666;transform:scaleY(1.09);transform-origin:50% 48%;">DR. DEROSA</div>
<div class="t" style="left:427.50px;top:248.06px;font-size:7.55px;color:#666;-webkit-text-stroke:0.15px #666;transform:scaleY(1.09);transform-origin:50% 48%;">DERSM</div>
<div class="t" style="left:533.50px;top:248.06px;font-size:7.55px;color:#666;-webkit-text-stroke:0.15px #666;transform:scaleY(1.09);transform-origin:50% 48%;">MAIN</div>
<div class="t" style="left:639.80px;top:247.96px;font-size:7.75px;color:#666;-webkit-text-stroke:0.15px #666;transform:scaleY(1.09);transform-origin:50% 48%;">FOLLOW UP CONSULT (30 MINUTES)</div>
<div class="t" style="left:236.00px;top:259.96px;font-size:7.55px;color:#666;-webkit-text-stroke:0.15px #666;transform:scaleY(1.09);transform-origin:50% 48%;">06/14/2017, 09:15 AM</div>
<div class="t" style="left:321.50px;top:259.96px;font-size:7.55px;color:#666;-webkit-text-stroke:0.15px #666;transform:scaleY(1.09);transform-origin:50% 48%;">DR. BONES</div>
<div class="t" style="left:427.50px;top:259.96px;font-size:7.55px;color:#666;-webkit-text-stroke:0.15px #666;transform:scaleY(1.09);transform-origin:50% 48%;">BONES</div>
<div class="t" style="left:533.50px;top:259.96px;font-size:7.55px;color:#666;-webkit-text-stroke:0.15px #666;transform:scaleY(1.09);transform-origin:50% 48%;">MEMOR</div>
<div class="t" style="left:639.80px;top:259.86px;font-size:7.75px;color:#666;-webkit-text-stroke:0.15px #666;transform:scaleY(1.09);transform-origin:50% 48%;">FLU</div>
<div class="a" style="left:227px;top:279px;width:175px;height:248.20000000000005px;border:1px solid #a6d3f0;background:#fff;overflow:hidden"><div class="a" style="left:0;top:0;right:0;height:14px;background:#d3eafa;border-bottom:1px solid #a6d3f0"></div></div>
<div class="t" style="left:235.60px;top:283.14px;font-size:7.8px;color:#1f3f79;font-weight:bold;transform:scaleY(1.09);transform-origin:50% 48%;">Insurance Summary</div>
<div class="a" style="left:405.3px;top:279px;width:213.3px;height:274px;border:1px solid #a6d3f0;border-bottom:0;background:#fff;overflow:hidden"><div class="a" style="left:0;top:0;right:0;height:14px;background:#d3eafa;border-bottom:1px solid #a6d3f0"></div></div>
<div class="t" style="left:413.90px;top:283.14px;font-size:7.8px;color:#1f3f79;font-weight:bold;transform:scaleY(1.09);transform-origin:50% 48%;">Clinical Summary</div>
<div class="a" style="left:621.7px;top:279px;width:168.5px;height:66px;border:1px solid #a6d3f0;background:#fff;overflow:hidden"><div class="a" style="left:0;top:0;right:0;height:14px;background:#d3eafa;border-bottom:1px solid #a6d3f0"></div></div>
<div class="t" style="left:630.30px;top:283.84px;font-size:7.8px;color:#1f3f79;font-weight:bold;transform:scaleY(1.09);transform-origin:50% 48%;">Pharmacy</div>
<div class="a" style="left:621.7px;top:348.3px;width:168.5px;height:128.5px;border:1px solid #a6d3f0;background:#fff;overflow:hidden"><div class="a" style="left:0;top:0;right:0;height:14px;background:#d3eafa;border-bottom:1px solid #a6d3f0"></div></div>
<div class="t" style="left:630.30px;top:353.44px;font-size:7.8px;color:#1f3f79;font-weight:bold;transform:scaleY(1.09);transform-origin:50% 48%;">Notes</div>
<div class="t" style="left:235.30px;top:302.97px;font-size:6.9px;color:#4aa0dc;font-weight:bold;transform:scaleY(1.09);transform-origin:50% 48%;">Insurance Profile</div>
<div class="t" style="left:235.30px;top:314.99px;font-size:7.7px;color:#474747;-webkit-text-stroke:0.15px #474747;transform:scaleY(1.09);transform-origin:50% 48%;">Auto Insurance/Auto Insurance/HMO/HMO</div>
<div class="t" style="left:235.30px;top:327.67px;font-size:6.9px;color:#4aa0dc;font-weight:bold;transform:scaleY(1.09);transform-origin:50% 48%;">Primary Insurance</div>
<div class="t" style="left:235.30px;top:339.59px;font-size:7.7px;color:#474747;-webkit-text-stroke:0.15px #474747;transform:scaleY(1.09);transform-origin:50% 48%;">Auto Insurance</div>
<div class="t" style="left:235.30px;top:351.99px;font-size:7.7px;color:#474747;-webkit-text-stroke:0.15px #474747;transform:scaleY(1.09);transform-origin:50% 48%;">STATE FARM</div>
<div class="t" style="left:235.30px;top:364.69px;font-size:7.7px;color:#474747;-webkit-text-stroke:0.15px #474747;transform:scaleY(1.09);transform-origin:50% 48%;">Member Number: 561121212</div>
<div class="t" style="left:235.30px;top:379.87px;font-size:6.9px;color:#4aa0dc;font-weight:bold;transform:scaleY(1.09);transform-origin:50% 48%;">Secondary Insurance</div>
<div class="t" style="left:235.30px;top:391.59px;font-size:7.7px;color:#474747;-webkit-text-stroke:0.15px #474747;transform:scaleY(1.09);transform-origin:50% 48%;">Auto Insurance</div>
<div class="t" style="left:235.30px;top:404.19px;font-size:7.7px;color:#474747;-webkit-text-stroke:0.15px #474747;transform:scaleY(1.09);transform-origin:50% 48%;">STATE FARM</div>
<div class="t" style="left:235.30px;top:416.99px;font-size:7.7px;color:#474747;-webkit-text-stroke:0.15px #474747;transform:scaleY(1.09);transform-origin:50% 48%;">Member Number: 123345332</div>
<div class="t" style="left:235.30px;top:432.57px;font-size:6.9px;color:#4aa0dc;font-weight:bold;transform:scaleY(1.09);transform-origin:50% 48%;">Tertiary Insurance</div>
<div class="t" style="left:235.30px;top:444.19px;font-size:7.7px;color:#474747;-webkit-text-stroke:0.15px #474747;transform:scaleY(1.09);transform-origin:50% 48%;">HMO</div>
<div class="t" style="left:235.30px;top:456.79px;font-size:7.7px;color:#474747;-webkit-text-stroke:0.15px #474747;transform:scaleY(1.09);transform-origin:50% 48%;">AETNA</div>
<div class="t" style="left:235.30px;top:469.39px;font-size:7.7px;color:#474747;-webkit-text-stroke:0.15px #474747;transform:scaleY(1.09);transform-origin:50% 48%;">Member Number: 12345678</div>
<div class="t" style="left:235.30px;top:485.17px;font-size:6.9px;color:#4aa0dc;font-weight:bold;transform:scaleY(1.09);transform-origin:50% 48%;">Responsible Party</div>
<div class="t" style="left:235.30px;top:496.69px;font-size:7.7px;color:#474747;-webkit-text-stroke:0.15px #474747;transform:scaleY(1.09);transform-origin:50% 48%;">KENNY ANDERSON (Self)</div>
<div class="t" style="left:235.30px;top:509.79px;font-size:7.7px;color:#474747;-webkit-text-stroke:0.15px #474747;transform:scaleY(1.09);transform-origin:50% 48%;">(305) 222-3333 (Home)</div>
<div class="t" style="left:414.00px;top:302.97px;font-size:6.9px;color:#4aa0dc;font-weight:bold;transform:scaleY(1.09);transform-origin:50% 48%;">Primary Provider:</div>
<div class="t" style="left:414.00px;top:314.89px;font-size:7.7px;color:#474747;-webkit-text-stroke:0.15px #474747;transform:scaleY(1.09);transform-origin:50% 48%;">DR. LAUREN R DEROSA</div>
<div class="t" style="left:414.00px;top:327.67px;font-size:6.9px;color:#4aa0dc;font-weight:bold;transform:scaleY(1.09);transform-origin:50% 48%;">Primary Location:</div>
<div class="t" style="left:414.00px;top:339.69px;font-size:7.7px;color:#474747;-webkit-text-stroke:0.15px #474747;transform:scaleY(1.09);transform-origin:50% 48%;">MAIN MEDICAL CENTER</div>
<div class="t" style="left:414.00px;top:352.37px;font-size:6.9px;color:#4aa0dc;font-weight:bold;transform:scaleY(1.09);transform-origin:50% 48%;">Referred By:</div>
<div class="t" style="left:414.00px;top:364.39px;font-size:7.7px;color:#474747;-webkit-text-stroke:0.15px #474747;transform:scaleY(1.09);transform-origin:50% 48%;">CAMILO E. LOPEZ PA</div>
<div class="t" style="left:414.00px;top:376.77px;font-size:6.9px;color:#4aa0dc;font-weight:bold;transform:scaleY(1.09);transform-origin:50% 48%;">Last Seen By:</div>
<div class="t" style="left:414.00px;top:388.79px;font-size:7.7px;color:#474747;-webkit-text-stroke:0.15px #474747;transform:scaleY(1.09);transform-origin:50% 48%;">DR. LAUREN R DEROSA (06/13/2017)</div>
<div class="t" style="left:414.00px;top:401.59px;font-size:7.7px;color:#474747;-webkit-text-stroke:0.15px #474747;transform:scaleY(1.09);transform-origin:50% 48%;">MAIN MEDICAL CENTER</div>
<div class="t" style="left:414.00px;top:413.67px;font-size:6.9px;color:#4aa0dc;font-weight:bold;transform:scaleY(1.09);transform-origin:50% 48%;">Diagnoses:</div>
<div class="t" style="left:414.00px;top:496.57px;font-size:6.9px;color:#4aa0dc;font-weight:bold;transform:scaleY(1.09);transform-origin:50% 48%;">Medications:</div>
<div class="t" style="left:414.00px;top:508.59px;font-size:7.7px;color:#474747;-webkit-text-stroke:0.15px #474747;transform:scaleY(1.09);transform-origin:50% 48%;">Cipro 250 mg oral tablet</div>
<div class="t" style="left:414.00px;top:517.99px;font-size:7.7px;color:#474747;-webkit-text-stroke:0.15px #474747;transform:scaleY(1.09);transform-origin:50% 48%;">Biaxin 250 mg oral tablet</div>
<div class="t" style="left:414.00px;top:527.79px;font-size:7.7px;color:#474747;-webkit-text-stroke:0.15px #474747;transform:scaleY(1.09);transform-origin:50% 48%;">IBU 800 mg oral tablet</div>
<div class="t" style="left:414.00px;top:537.79px;font-size:7.7px;color:#474747;-webkit-text-stroke:0.15px #474747;transform:scaleY(1.09);transform-origin:50% 48%;">PriLOSEC 10 mg oral delayed release capsule</div>
<div class="t" style="left:414.00px;top:547.49px;font-size:7.7px;color:#474747;-webkit-text-stroke:0.15px #474747;transform:scaleY(1.09);transform-origin:50% 48%;">Neurontin 600 mg oral tablet</div>
<div class="t" style="left:414.00px;top:425.69px;font-size:7.7px;color:#474747;-webkit-text-stroke:0.15px #474747;transform:scaleY(1.09);transform-origin:50% 48%;">G44.209</div>
<div class="t" style="left:446.60px;top:425.69px;font-size:7.7px;color:#474747;-webkit-text-stroke:0.15px #474747;transform:scaleY(1.09);transform-origin:50% 48%;">Tension-typ Headache Uns Not Intrct <i style="color:#3a3a3a">05/27/17</i></div>
<div class="t" style="left:414.00px;top:435.59px;font-size:7.7px;color:#474747;-webkit-text-stroke:0.15px #474747;transform:scaleY(1.09);transform-origin:50% 48%;">I10</div>
<div class="t" style="left:446.60px;top:435.59px;font-size:7.7px;color:#474747;-webkit-text-stroke:0.15px #474747;transform:scaleY(1.09);transform-origin:50% 48%;">Essential Primary Hypertension <i style="color:#3a3a3a">05/27/17</i></div>
<div class="t" style="left:414.00px;top:445.59px;font-size:7.7px;color:#474747;-webkit-text-stroke:0.15px #474747;transform:scaleY(1.09);transform-origin:50% 48%;">M51.27</div>
<div class="t" style="left:446.60px;top:445.59px;font-size:7.7px;color:#474747;-webkit-text-stroke:0.15px #474747;transform:scaleY(1.09);transform-origin:50% 48%;">Oth Iv Disc Displacement Ls Region <i style="color:#3a3a3a">05/27/17</i></div>
<div class="t" style="left:414.00px;top:454.89px;font-size:7.7px;color:#474747;-webkit-text-stroke:0.15px #474747;transform:scaleY(1.09);transform-origin:50% 48%;">E08.22</div>
<div class="t" style="left:446.60px;top:454.89px;font-size:7.7px;color:#474747;-webkit-text-stroke:0.15px #474747;transform:scaleY(1.09);transform-origin:50% 48%;">Dm D/t Underly Cond W/diabetic Ckd <i style="color:#3a3a3a">05/27/17</i></div>
<div class="t" style="left:414.00px;top:464.39px;font-size:7.7px;color:#474747;-webkit-text-stroke:0.15px #474747;transform:scaleY(1.09);transform-origin:50% 48%;">G44.001</div>
<div class="t" style="left:446.60px;top:464.39px;font-size:7.7px;color:#474747;-webkit-text-stroke:0.15px #474747;transform:scaleY(1.09);transform-origin:50% 48%;">Cluster Headache Uns Intractable <i style="color:#3a3a3a">05/27/17</i></div>
<div class="t" style="left:414.00px;top:474.19px;font-size:7.7px;color:#474747;-webkit-text-stroke:0.15px #474747;transform:scaleY(1.09);transform-origin:50% 48%;">A37.80</div>
<div class="t" style="left:446.60px;top:474.19px;font-size:7.7px;color:#474747;-webkit-text-stroke:0.15px #474747;transform:scaleY(1.09);transform-origin:50% 48%;">Wc Oth Bordetella Species W/o Pneum <i style="color:#3a3a3a">05/27/17</i></div>
<div class="t" style="left:414.00px;top:484.09px;font-size:7.7px;color:#474747;-webkit-text-stroke:0.15px #474747;transform:scaleY(1.09);transform-origin:50% 48%;">Z00.01</div>
<div class="t" style="left:446.60px;top:484.09px;font-size:7.7px;color:#474747;-webkit-text-stroke:0.15px #474747;transform:scaleY(1.09);transform-origin:50% 48%;">Enc Gen Adult Exam W/abnormal Find <i style="color:#3a3a3a">05/27/17</i></div>
<div class="a" style="left:404px;top:554px;width:217px;height:5px;background:#fff"></div>
<svg class="a" style="left:743.5px;top:284px" width="13" height="7.5" viewBox="0 0 13 7.5"><g fill="none" stroke="#1f4a86" stroke-width="1.5"><path d="M0,1.2 L3,1.2 C5.5,1.2 6.5,6.2 9,6.2 L10.5,6.2"/><path d="M0,6.2 L3,6.2 C5.5,6.2 6.5,1.2 9,1.2 L10.5,1.2"/></g><path d="M9.8,-0.6 L12.6,1.2 L9.8,3 Z M9.8,4.4 L12.6,6.2 L9.8,8 Z" fill="#1f4a86"/></svg>
<div class="t" style="left:760.00px;top:284.46px;font-size:6.3px;color:#2a4a80;font-weight:bold;transform:scaleY(1.09);transform-origin:50% 48%;">Change</div>
<div class="t" style="left:630.20px;top:302.99px;font-size:7.7px;color:#4c4c4c;-webkit-text-stroke:0.15px #4c4c4c;transform:scaleY(1.09);transform-origin:50% 48%;">ALL HEART PHARMACY</div>
<div class="t" style="left:630.20px;top:315.89px;font-size:7.7px;color:#4c4c4c;-webkit-text-stroke:0.15px #4c4c4c;transform:scaleY(1.09);transform-origin:50% 48%;">911 SE 6TH AVE , SUITE 105</div>
<div class="t" style="left:630.20px;top:328.39px;font-size:7.7px;color:#4c4c4c;-webkit-text-stroke:0.15px #4c4c4c;transform:scaleY(1.09);transform-origin:50% 48%;">Delray Beach, Florida&nbsp; 33483</div>
<svg class="a" style="left:759px;top:351.5px" width="9" height="9" viewBox="0 0 9 9"><path d="M1,8 L1.5,5.8 L6.5,0.8 L8.2,2.5 L3.2,7.5 Z" fill="none" stroke="#1f4a86" stroke-width="1.4"/></svg>
<div class="t" style="left:771.50px;top:353.82px;font-size:6.4px;color:#34548a;font-weight:bold;transform:scaleY(1.09);transform-origin:50% 48%;">Edit</div>
<div class="t" style="left:630.30px;top:372.09px;font-size:7.7px;color:#4c4c4c;-webkit-text-stroke:0.15px #4c4c4c;transform:scaleY(1.09);transform-origin:50% 48%;">IMPORTANT: He was a public school teacher</div>
<div class="t" style="left:630.30px;top:382.09px;font-size:7.7px;color:#4c4c4c;-webkit-text-stroke:0.15px #4c4c4c;transform:scaleY(1.09);transform-origin:50% 48%;">(Calculus at the North High School) and is</div>
<div class="t" style="left:630.30px;top:391.99px;font-size:7.7px;color:#4c4c4c;-webkit-text-stroke:0.15px #4c4c4c;transform:scaleY(1.09);transform-origin:50% 48%;">very scared that his issues will affect his</div>
<div class="t" style="left:630.30px;top:401.69px;font-size:7.7px;color:#4c4c4c;-webkit-text-stroke:0.15px #4c4c4c;transform:scaleY(1.09);transform-origin:50% 48%;">reputation.</div>
<div class="t" style="left:630.30px;top:421.29px;font-size:7.7px;color:#4c4c4c;-webkit-text-stroke:0.15px #4c4c4c;transform:scaleY(1.09);transform-origin:50% 48%;">*** Please be aware that he is very shy but</div>
<div class="t" style="left:630.30px;top:430.79px;font-size:7.7px;color:#4c4c4c;-webkit-text-stroke:0.15px #4c4c4c;transform:scaleY(1.09);transform-origin:50% 48%;">likes to know as much as possible about his</div>
<div class="t" style="left:630.30px;top:440.29px;font-size:7.7px;color:#4c4c4c;-webkit-text-stroke:0.15px #4c4c4c;transform:scaleY(1.09);transform-origin:50% 48%;">issues. ***</div>
<div class="t" style="left:630.30px;top:459.59px;font-size:7.7px;color:#4c4c4c;-webkit-text-stroke:0.15px #4c4c4c;transform:scaleY(1.09);transform-origin:50% 48%;">Goes by Ken</div>
<div class="t" style="right:7.50px;top:554.34px;font-size:5.1px;color:#b4b4b4;font-weight:bold;font-style:italic;transform:scaleY(1.09);transform-origin:50% 48%;">CPT&reg; only &copy; 2016 American Medical Association. All Rights Reserved.</div>
<div class="a" style="left:0px;top:559.5px;width:800px;height:21px;background:linear-gradient(#f2f3f5,#f5f6f8 90%,#fff 100%)"></div>
<div class="a" style="left:0px;top:578.5px;width:800px;height:1.5px;background:#111"></div>
<div class="a" style="left:5px;top:562px;width:198px;height:16.5px;border:1px solid #b8c4d0;border-radius:4px 0 0 4px;background:linear-gradient(#eef2f6,#f8fafc)"></div>
<div class="t" style="left:9.50px;top:567.03px;font-size:7.2px;color:#9aa0a8;-webkit-text-stroke:0.15px #9aa0a8;transform:scaleY(1.09);transform-origin:50% 48%;">Search Help...</div>
<div class="a" style="left:202px;top:562px;width:19.5px;height:16.5px;border:1px solid #c8ccd0;border-radius:0 4px 4px 0;background:linear-gradient(#fafafa,#e8e8e8)"></div>
<svg class="a" style="left:206px;top:565px" width="11" height="11" viewBox="0 0 11 11"><circle cx="4.5" cy="4.5" r="3" fill="none" stroke="#222" stroke-width="1.4"/><path d="M6.7,6.7 L9.5,9.5" stroke="#222" stroke-width="1.8"/></svg>
<div class="a" style="left:637.5px;top:560.7px;width:143.5px;height:20px;border:1px solid #d8dadc;border-bottom:0;background:linear-gradient(#fbfbfb,#f2f2f2)"></div>
<svg class="a" style="left:644px;top:564px" width="15" height="12" viewBox="0 0 15 12"><ellipse cx="9.5" cy="4.5" rx="4.5" ry="3.3" fill="#1f4a86"/><ellipse cx="5.5" cy="7" rx="5" ry="3.6" fill="#1f4a86" stroke="#f6f6f6" stroke-width="0.8"/><path d="M2,9.5 L1,11.8 L4.5,10" fill="#1f4a86"/></svg>
<div class="t" style="left:662.50px;top:566.38px;font-size:7.5px;color:#1f4a86;font-weight:bold;transform:scaleY(1.09);transform-origin:50% 48%;">Chat(19)</div>
</body></html>
